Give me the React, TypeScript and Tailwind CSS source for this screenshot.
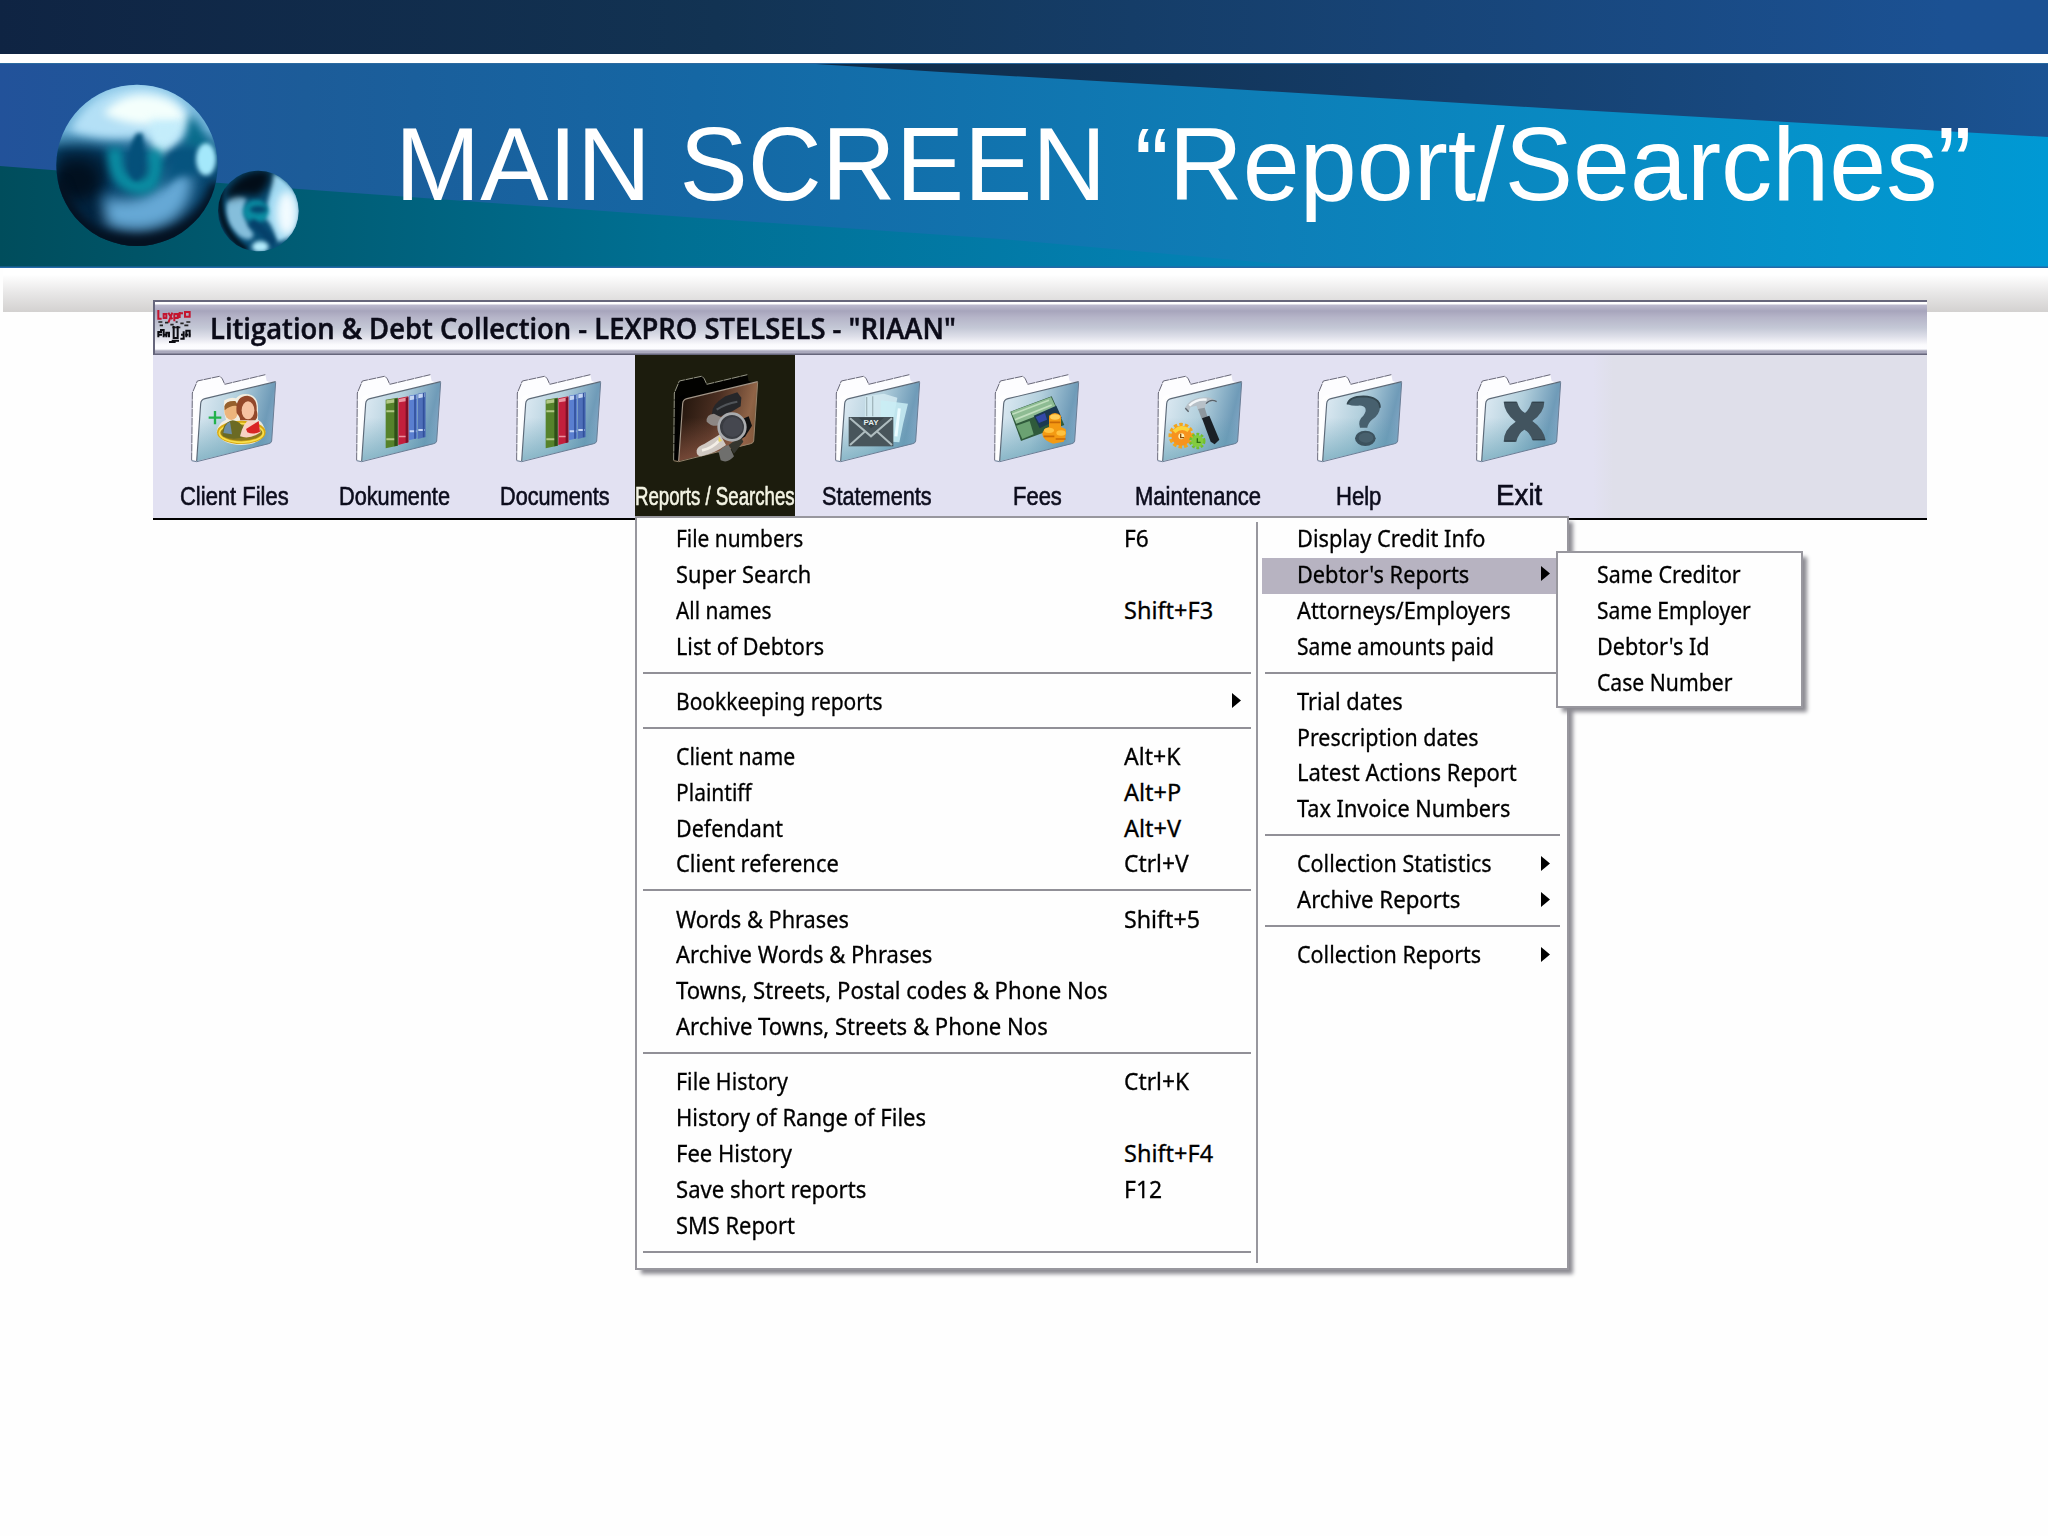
import { ReactNode, useLayoutEffect, useRef, useState } from "react";

type MenuItem = {
  label: string;
  width: number;
  keys?: string;
  keysWidth?: number;
  arrow?: boolean;
  active?: boolean;
};

type Entry = MenuItem | "separator";

const leftMenu: Entry[] = [
  { label: "File numbers", width: 127, keys: "F6", keysWidth: 25 },
  { label: "Super Search", width: 135 },
  { label: "All names", width: 95, keys: "Shift+F3", keysWidth: 89 },
  { label: "List of Debtors", width: 148 },
  "separator",
  { label: "Bookkeeping reports", width: 207, arrow: true },
  "separator",
  { label: "Client name", width: 119, keys: "Alt+K", keysWidth: 57 },
  { label: "Plaintiff", width: 76, keys: "Alt+P", keysWidth: 57 },
  { label: "Defendant", width: 107, keys: "Alt+V", keysWidth: 57 },
  { label: "Client reference", width: 163, keys: "Ctrl+V", keysWidth: 65 },
  "separator",
  { label: "Words & Phrases", width: 173, keys: "Shift+5", keysWidth: 76 },
  { label: "Archive Words & Phrases", width: 256 },
  { label: "Towns, Streets, Postal codes & Phone Nos", width: 432 },
  { label: "Archive Towns, Streets & Phone Nos", width: 372 },
  "separator",
  { label: "File History", width: 112, keys: "Ctrl+K", keysWidth: 65 },
  { label: "History of Range of Files", width: 250 },
  { label: "Fee History", width: 116, keys: "Shift+F4", keysWidth: 89 },
  { label: "Save short reports", width: 190, keys: "F12", keysWidth: 38 },
  { label: "SMS Report", width: 119 },
  "separator",
];

const rightMenu: Entry[] = [
  { label: "Display Credit Info", width: 189 },
  { label: "Debtor's Reports", width: 172, arrow: true, active: true },
  { label: "Attorneys/Employers", width: 214 },
  { label: "Same amounts paid", width: 197 },
  "separator",
  { label: "Trial dates", width: 106 },
  { label: "Prescription dates", width: 182 },
  { label: "Latest Actions Report", width: 220 },
  { label: "Tax Invoice Numbers", width: 213 },
  "separator",
  { label: "Collection Statistics", width: 195, arrow: true },
  { label: "Archive Reports", width: 163, arrow: true },
  "separator",
  { label: "Collection Reports", width: 184, arrow: true },
];

const subMenu: MenuItem[] = [
  { label: "Same Creditor", width: 144 },
  { label: "Same Employer", width: 154 },
  { label: "Debtor's Id", width: 113 },
  { label: "Case Number", width: 135 },
];

// squeezes or stretches one line of text to the given width
function Fit({ width, children }: { width: number; children: string }) {
  const ref = useRef<HTMLSpanElement>(null);
  const [scale, setScale] = useState(1);

  useLayoutEffect(() => {
    if (ref.current) {
      setScale(width / ref.current.offsetWidth);
    }
  }, [width, children])

  return (
    <span className="block whitespace-pre" style={{ width }}>
      <span ref={ref} className="inline-block origin-left" style={{ transform: `scaleX(${scale})` }}>{children}</span>
    </span>
  )
}

function Spheres() {
  return (
    <svg className="absolute left-[40px] top-[7px]" width="280" height="200" viewBox="0 0 840 600">
      <defs>
        <clipPath id="big"><circle cx="291" cy="286" r="242" /></clipPath>
        <clipPath id="small"><circle cx="655" cy="423" r="121" /></clipPath>
        <filter id="b22" x="-50%" y="-50%" width="200%" height="200%" colorInterpolationFilters="sRGB"><feGaussianBlur stdDeviation="20" /></filter>
        <filter id="b12" x="-50%" y="-50%" width="200%" height="200%" colorInterpolationFilters="sRGB"><feGaussianBlur stdDeviation="12" /></filter>
        <filter id="b6" x="-50%" y="-50%" width="200%" height="200%" colorInterpolationFilters="sRGB"><feGaussianBlur stdDeviation="6" /></filter>
        <linearGradient id="bigBase" x1="0" y1="0" x2="0" y2="1">
          <stop offset="0" stopColor="#8cc8e8" />
          <stop offset=".28" stopColor="#6db0d6" />
          <stop offset=".42" stopColor="#0b5480" />
          <stop offset=".7" stopColor="#08426a" />
          <stop offset="1" stopColor="#06101f" />
        </linearGradient>
      </defs>
      <g clipPath="url(#big)">
        <rect x="40" y="40" width="500" height="500" fill="url(#bigBase)" />
        <path d="M40 240 Q130 220 205 250 Q225 340 180 380 Q200 450 240 500 H100 Q50 420 40 240Z" fill="#032440" filter="url(#b22)" />
        <ellipse cx="110" cy="330" rx="70" ry="60" fill="#01101f" filter="url(#b22)" />
        <path d="M90 180 Q150 60 290 50 Q410 50 460 150 Q450 200 380 235 Q340 200 300 200 Q180 215 90 180Z" fill="#b4e0f6" filter="url(#b12)" />
        <path d="M190 130 Q240 75 310 75 Q420 80 435 150 Q400 180 330 165 Q240 160 190 130Z" fill="#f4fffc" filter="url(#b12)" />
        <path d="M330 150 L440 150 Q410 215 360 260 Q325 240 330 150Z" fill="#c4edfb" filter="url(#b12)" />
        <path d="M190 380 Q300 410 380 330 Q420 270 455 320 Q460 400 400 450 Q310 505 200 465Z" fill="#66a9d6" filter="url(#b22)" />
        <path d="M225 235 Q220 345 300 352 Q365 345 340 240" fill="none" stroke="#0a8ea3" strokeWidth="42" filter="url(#b12)" />
        <path d="M290 190 Q262 230 268 300 Q278 345 300 325 Q318 260 308 190Z" fill="#04507a" filter="url(#b6)" />
        <path d="M450 130 Q500 190 515 240 L430 240Z" fill="#0a6c8c" filter="url(#b12)" />
        <path d="M400 250 Q440 210 480 240 L470 320 Q420 300 360 360Z" fill="#06547f" filter="url(#b12)" />
        <path d="M55 340 Q100 515 290 518 Q480 510 530 340" fill="none" stroke="#04101f" strokeWidth="36" filter="url(#b12)" />
        <ellipse cx="498" cy="268" rx="30" ry="48" fill="#a4e8fb" filter="url(#b6)" />
      </g>
      <g clipPath="url(#small)">
        <rect x="530" y="300" width="250" height="250" fill="#0a5078" />
        <path d="M700 310 Q780 350 780 430 Q770 510 710 515 Q700 460 670 440 Q690 380 700 310Z" fill="#9fd9f2" filter="url(#b6)" />
        <ellipse cx="740" cy="430" rx="30" ry="66" fill="#f2fbff" filter="url(#b12)" />
        <path d="M560 400 Q580 360 620 385 Q600 440 640 490 Q640 520 600 500 Q550 460 560 400Z" fill="#85bedb" filter="url(#b6)" />
        <path d="M555 370 Q600 290 690 300 Q700 350 650 380 Q600 370 560 390Z" fill="#020d18" filter="url(#b12)" />
        <path d="M542 350 Q525 480 620 540" fill="none" stroke="#02101c" strokeWidth="18" filter="url(#b6)" />
        <ellipse cx="648" cy="425" rx="38" ry="34" fill="#0a8ea3" filter="url(#b6)" />
        <ellipse cx="655" cy="418" rx="26" ry="11" fill="#04466e" filter="url(#b6)" />
        <path d="M632 455 Q672 480 700 522" fill="none" stroke="#05406a" strokeWidth="24" filter="url(#b6)" />
        <ellipse cx="661" cy="530" rx="25" ry="17" fill="#b4ecfc" filter="url(#b6)" />
      </g>
    </svg>
  )
}

function Header() {
  return (
    <header>
      <div className="h-[54px] bg-linear-to-r from-[#0f2443] from-0% via-[#123353] via-35% to-[#1b5193] to-95%"></div>
      <div className="h-[9px] bg-white"></div>
      <div className="relative h-[205px]">
        <svg className="absolute inset-0" width="2048" height="205" viewBox="0 63 2048 205">
          <defs>
            <linearGradient id="sky">
              <stop offset="0" stopColor="#22529a" />
              <stop offset=".15" stopColor="#1c5c99" />
              <stop offset=".34" stopColor="#1567a4" />
              <stop offset=".6" stopColor="#0e7db6" />
              <stop offset=".9" stopColor="#0494cc" />
              <stop offset="1" stopColor="#0099d4" />
            </linearGradient>
            <linearGradient id="teal">
              <stop offset="0" stopColor="#004d5c" />
              <stop offset=".5" stopColor="#006f92" />
              <stop offset="1" stopColor="#0485bb" />
            </linearGradient>
            <linearGradient id="navy">
              <stop offset="0" stopColor="#0d2a47" />
              <stop offset=".3" stopColor="#12355a" />
              <stop offset="1" stopColor="#1b5393" />
            </linearGradient>
          </defs>
          <rect y="63" width="2048" height="205" fill="url(#sky)" />
          <path d="M0 166 L299 189 L700 218 L1001 239 L1325 268 H0Z" fill="url(#teal)" />
          <path d="M800 63 L941 72 L1199 87 L1560 109 L2048 137 V63Z" fill="url(#navy)" />
          <path d="M0 267.3 H2048" stroke="#2569a8" strokeWidth="1.4" />
          <path d="M0 63.5 H2048" stroke="#2b6aa0" strokeWidth="1" />
        </svg>
        <Spheres />
        <h1 className="relative pl-[395px] pt-[43px] text-[103px] leading-[118px] text-white font-['Liberation_Sans',Arial,sans-serif]">
          <Fit width={1577}>MAIN SCREEN “Report/Searches”</Fit>
        </h1>
      </div>
      <div className="ml-[3px] h-[44px] bg-linear-to-b from-white from-15% via-[#e9e8e8] via-55% to-[#d3d1d0]"></div>
    </header>
  )
}

function Folder({ inverted, children }: { inverted?: boolean; children: ReactNode }) {
  return (
    <svg width="88" height="90" viewBox="0 0 264 270">
      <defs>
        <linearGradient id="front" x1="0" y1=".35" x2="1" y2=".6">
          <stop offset="0" stopColor="#dce9f2" />
          <stop offset=".45" stopColor="#b3d0dd" />
          <stop offset=".85" stopColor="#6f9bb8" />
          <stop offset="1" stopColor="#86a9c9" />
        </linearGradient>
        <linearGradient id="shade" x1="0" y1="0" x2="0" y2="1">
          <stop offset=".45" stopColor="#5f9db2" stopOpacity="0" />
          <stop offset="1" stopColor="#5f9db2" stopOpacity=".6" />
        </linearGradient>
      </defs>
      <g className={inverted ? "invert" : ""}>
        <path d="M5 262 L7 60 L22 24 L88 10 Q96 10 104 34 L226 5 L230 24 L250 30 L40 90 L24 264Z" fill="#fdfdff" />
        <path d="M5 262 L7 60 L22 24 L88 10 Q96 10 104 34 L226 5" fill="none" stroke="#686878" strokeWidth="3" strokeDasharray="24 2" />
        <path d="M20 264 L32 92 Q33 80 45 77 L257 26 L245 204 Q244 210 238 212 Z" fill="url(#front)" />
        <path d="M20 264 L32 92 Q33 80 45 77 L257 26 L245 204 Q244 210 238 212 Z" fill="url(#shade)" />
        <path d="M20 264 L32 92 Q33 80 45 77 L257 26" fill="none" stroke="#5d6a78" strokeWidth="3.5" />
        <path d="M257 28 L245 204 Q244 210 236 212 L20 266 L5 263" fill="none" stroke="#6a7d95" strokeWidth="3" />
        <path d="M12 258 L18 90 Q22 72 40 68" fill="none" stroke="#fff" strokeWidth="8" />
      </g>
      {children}
    </svg>
  )
}

function ClientArt() {
  return (
    <g>
      <path d="M103 82 Q122 70 138 76 Q152 60 176 64 Q204 70 204 104 V140 Q222 150 226 176 Q216 214 154 216 Q92 214 80 176 Q84 150 108 140 Q98 110 103 82Z" fill="#fff3df" opacity=".85" />
      <ellipse cx="154" cy="178" rx="68" ry="30" fill="#8c7a1e" stroke="#d8a913" strokeWidth="10" />
      <ellipse cx="154" cy="180" rx="66" ry="28" fill="none" stroke="#f7e04f" strokeWidth="5" />
      <path d="M98 190 Q94 150 128 142 Q160 146 170 190 Q130 204 98 190Z" fill="#6b6a24" />
      <path d="M100 180 Q104 152 120 146 L126 184Z" fill="#6d8fa6" />
      <path d="M150 190 Q160 146 180 140 Q208 148 212 178 Q180 200 150 190Z" fill="#f7d3c3" />
      <path d="M168 168 L206 144 L210 176 Q190 186 172 178Z" fill="#d92525" />
      <ellipse cx="124" cy="114" rx="21" ry="27" fill="#edb57c" />
      <path d="M103 100 Q108 82 136 84 L146 100 Q124 94 104 112Z" fill="#96602c" />
      <path d="M140 120 Q134 70 172 68 Q202 72 200 112 Q206 134 196 142 L150 142 Q152 134 140 120Z" fill="#93482a" />
      <ellipse cx="174" cy="112" rx="19" ry="27" fill="#f6c3a3" />
      <path d="M56 134 H94 M75 114 V154" stroke="#22b14c" strokeWidth="7" />
    </g>
  )
}

function BooksArt() {
  return (
    <g>
      <path d="M92 80 L128 74 V218 L92 226Z" fill="#56822b" />
      <path d="M94 82 L126 77 V88 L94 92Z M94 112 H126 V118 H94Z M94 196 H126 V202 H94Z" fill="#b3c988" />
      <path d="M118 78 L128 76 V218 L118 220Z" fill="#2f4f18" />
      <path d="M130 76 L160 70 V208 L130 216Z" fill="#c21f3c" />
      <path d="M132 78 L158 73 V84 L132 88Z M132 188 H158 V193 H132Z" fill="#eb93a0" />
      <path d="M152 74 L160 72 V208 L152 210Z" fill="#7e1028" />
      <path d="M162 68 L186 64 V196 L162 202Z" fill="#5a7fd0" />
      <path d="M188 62 L212 58 V192 L188 198Z" fill="#4e6fb9" />
      <path d="M164 70 L184 66 V78 L164 82Z M190 64 L210 60 V72 L190 76Z M164 172 H184 V178 H164Z M190 168 H210 V174 H190Z" fill="#c3d5f4" />
      <path d="M180 66 V197 M206 60 V193" stroke="#31509b" strokeWidth="5" />
    </g>
  )
}

function SearchArt() {
  return (
    <g>
      <path d="M120 122 Q118 96 160 70 L196 58 L208 74 L206 100 Q160 130 132 132Z" fill="#26272a" />
      <path d="M134 110 Q160 92 196 86" fill="none" stroke="#505459" strokeWidth="6" />
      <path d="M104 146 Q102 124 126 122 L150 134 L148 154 Q124 166 104 146Z" fill="#8d8784" />
      <path d="M206 140 L230 130 L240 158 L220 190 L190 212 L182 190Z" fill="#101010" />
      <path d="M74 232 Q76 220 98 212 Q126 196 144 184 L162 216 Q130 240 88 250 Q72 250 74 232Z" fill="#cfc8c2" />
      <path d="M90 232 Q120 226 140 204" fill="none" stroke="#f3eee6" strokeWidth="8" />
      <path d="M140 238 Q150 220 170 216 L186 250 Q168 272 146 262Z" fill="#6f6f6d" />
      <path d="M170 216 L206 190 L214 206 L186 242Z" fill="#35362f" />
      <circle cx="180" cy="162" r="40" fill="#3a3c42" stroke="#a9abae" strokeWidth="8" />
      <circle cx="182" cy="162" r="30" fill="#45474f" />
      <path d="M140 190 L150 204 L140 206Z" fill="#f0dc60" />
    </g>
  )
}

function StatementsArt() {
  return (
    <g>
      <path d="M94 70 L150 62 L190 74 L176 150 H92Z" fill="#d5ebf2" opacity=".85" />
      <path d="M140 82 L222 92 L208 150 L196 208 L140 204Z" fill="#c9edf5" opacity=".85" />
      <path d="M98 72 V130 M116 70 V130" stroke="#a2b7bd" strokeWidth="4" />
      <path d="M196 106 L186 190" stroke="#eafbff" strokeWidth="9" />
      <rect x="44" y="132" width="134" height="88" fill="#48555b" />
      <path d="M48 136 L111 190 L174 136 M48 216 L92 176 M174 216 L130 176" fill="none" stroke="#aebcbf" strokeWidth="6" />
      <path d="M74 134 H150 L111 166Z" fill="#39454b" />
      <text x="111" y="156" textAnchor="middle" className="fill-[#e5eded] text-[24px] font-bold font-['Liberation_Sans',Arial,sans-serif]">PAY</text>
    </g>
  )
}

function FeesArt() {
  return (
    <g>
      <path d="M52 116 L176 70 L214 156 L84 204Z" fill="#2f5a3b" />
      <path d="M54 116 L174 72 L190 106 L70 152Z" fill="#8ebc93" />
      <path d="M70 158 L110 144 L122 184 L88 198Z" fill="#6ba272" />
      <path d="M58 124 L168 82 M66 140 L176 96" stroke="#c1dfbf" strokeWidth="5" />
      <path d="M122 128 L190 98 L206 134 L140 166Z" fill="#1c3a50" />
      <path d="M128 132 L156 120 L162 140 L138 150Z" fill="#3348a8" />
      <path d="M168 128 Q186 112 204 128 V162 L218 168 Q222 186 212 206 L180 212 Q150 202 148 184 Q150 166 168 162Z" fill="#f49a12" />
      <ellipse cx="186" cy="132" rx="15" ry="8" fill="#ffcf5a" />
      <ellipse cx="168" cy="172" rx="15" ry="8" fill="#ffc23f" />
      <ellipse cx="204" cy="180" rx="14" ry="8" fill="#ffc23f" />
      <path d="M170 148 H202 M152 190 H184 M188 198 H218" stroke="#c96a06" strokeWidth="5" />
    </g>
  )
}

function MaintenanceArt() {
  return (
    <g>
      <circle cx="76" cy="188" r="32" fill="none" stroke="#f2a51c" strokeWidth="13" strokeDasharray="10 6" />
      <circle cx="76" cy="188" r="30" fill="#f7931e" />
      <path d="M54 176 Q76 156 98 172" fill="none" stroke="#fbd53c" strokeWidth="12" />
      <circle cx="76" cy="190" r="9" fill="#fff0b8" />
      <path d="M74 182 V194 H84" fill="none" stroke="#8a4d08" strokeWidth="4" />
      <circle cx="124" cy="204" r="20" fill="none" stroke="#72bf2c" strokeWidth="9" strokeDasharray="8 5" />
      <circle cx="124" cy="204" r="18" fill="#82cc3f" />
      <path d="M124 196 V208 H134" fill="none" stroke="#2d6e12" strokeWidth="4" />
      <path d="M86 106 Q100 78 130 74 Q166 68 182 86 Q160 82 150 92 L146 108 L126 112 L122 98 L104 102 L96 118Z" fill="#b7c0c7" />
      <path d="M100 98 Q122 76 152 80" fill="none" stroke="#f3f6f8" strokeWidth="7" />
      <path d="M150 92 Q164 76 182 86 M88 106 L98 116" fill="none" stroke="#59636b" strokeWidth="4" />
      <path d="M126 108 L146 104 L156 136 L138 140Z" fill="#8d979e" />
      <path d="M138 136 L160 128 L190 200 L176 214 L164 206Z" fill="#1a2026" />
    </g>
  )
}

function HelpArt() {
  return (
    <g>
      <path d="M94 94 Q100 70 142 70 Q192 72 192 104 Q190 126 168 140 Q156 150 154 164 L132 164 Q124 142 142 128 Q152 116 148 106 Q142 96 126 98 Q112 100 94 94Z" fill="#47606e" />
      <path d="M94 94 Q100 70 142 70 Q192 72 192 104" fill="none" stroke="#33464f" strokeWidth="5" />
      <ellipse cx="148" cy="196" rx="31" ry="23" fill="#3c525e" />
      <ellipse cx="150" cy="194" rx="22" ry="15" fill="#48606d" />
    </g>
  )
}

function ExitArt() {
  return (
    <g>
      <path d="M86 86 H126 Q134 112 150 120 Q164 108 170 86 H208 Q208 118 172 144 Q206 168 212 202 H172 Q164 176 148 170 Q130 180 124 206 H86 Q86 170 122 146 Q88 120 86 86Z" fill="#42545f" />
      <path d="M88 88 H124 M172 88 H206 M174 200 H210 M88 204 H122" stroke="#33434d" strokeWidth="4" />
    </g>
  )
}

const toolbar = [
  { label: "Client Files", width: 109, shift: "pl-[37px]", art: <ClientArt /> },
  { label: "Dokumente", width: 111, shift: "pl-[41px]", art: <BooksArt /> },
  { label: "Documents", width: 110, shift: "pl-[41px]", art: <BooksArt /> },
  { label: "Reports / Searches", width: 160, shift: "pl-[37px]", art: <SearchArt />, active: true },
  { label: "Statements", width: 110, shift: "pl-[39px]", art: <StatementsArt /> },
  { label: "Fees", width: 49, shift: "pl-[37px]", art: <FeesArt /> },
  { label: "Maintenance", width: 126, shift: "pl-[39px]", art: <MaintenanceArt /> },
  { label: "Help", width: 45, shift: "pl-[39px]", art: <HelpArt /> },
  { label: "Exit", width: 46, shift: "pl-[37px]", art: <ExitArt />, large: true },
];

function AppIcon() {
  return (
    <svg width="36" height="36" viewBox="0 0 108 108">
      <path d="M4 6 V32 H14 M20 18 H28 V30 H20Z M34 14 L46 34 M46 14 L34 44 M52 16 V40 M52 18 H62 V30 H52 M68 12 V30 M68 16 H78 M84 12 H98 V26 H84Z" fill="none" stroke="#c4152f" strokeWidth="6" />
      <path d="M4 42 H16 M24 44 H34 M40 50 H50 M56 42 H62 M70 46 H80 M88 42 H100 M8 52 H18 M46 58 H70 M82 52 H94" stroke="#222" strokeWidth="5" />
      <path d="M4 88 V72 H12 V66 H20 V88 M28 88 V74 H36 V88 M50 54 V90 H62 V54 M44 98 H66 M70 92 H80 V70 M88 88 V68 H98 V88 M36 102 H56" fill="none" stroke="#0c0c12" strokeWidth="6" />
      <path d="M6 80 H36 M72 80 H100" stroke="#0c0c12" strokeWidth="6" strokeDasharray="9 4" />
    </svg>
  )
}

function Arrow() {
  return (
    <svg width="9" height="15" viewBox="0 0 9 15">
      <path d="M0 0 L9 7.5 L0 15Z" fill="#000" />
    </svg>
  )
}

function Row({ item, end }: { item: MenuItem; end: string }) {
  return (
    <li className={`flex items-center h-[35.9px] ${item.active ? "bg-[#b7b3c1]" : ""}`}>
      <div className="flex-1 pl-[34.5px] pb-[3px]"><Fit width={item.width}>{item.label}</Fit></div>
      {item.keys && <div className="w-[132px] pb-[3px]"><Fit width={item.keysWidth || 0}>{item.keys}</Fit></div>}
      {item.arrow && <div className={`pb-[4px] ${end}`}><Arrow /></div>}
    </li>
  )
}

function Column({ entries, line, end }: { entries: Entry[]; line: string; end: string }) {
  return (
    <ul>
      {entries.map((entry, index) => entry === "separator" ? (
        <li key={index} className={`h-[19.2px] pt-[6px] ${line}`}><hr className="border-t-2 border-[#919097]" /></li>
      ) : (
        <Row key={index} item={entry} end={end} />
      ))}
    </ul>
  )
}

function App() {
  return (
    <div className="w-[2048px] h-[1536px] overflow-hidden bg-[#fefefe]">
      <Header />

      <main className="relative -mt-[12px] ml-[153px] w-[1774px]">
        <div className="flex items-center h-[55px] pl-[2px] border-t-2 border-l-2 border-[#66667c] bg-[linear-gradient(to_bottom,#fff_0,#fff_2px,#bbb9ce_3px,#a7a5bc_9px,#b5b4c8_15px,#c4c8d6_26px,#dfe0ea_35px,#fbfbfe_43px,#fdfdff_47px,#aaa9bd_49px,#aaa9bd_51px,#66667c_52px)]">
          <div className="pb-[6px]"><AppIcon /></div>
          <div className="pl-[17px] pb-[2px] text-[29px] leading-[36px] font-semibold text-[#0b0b18] font-['Open_Sans',sans-serif] [-webkit-text-stroke:0.5px]">
            <Fit width={746}>Litigation & Debt Collection - LEXPRO STELSELS - "RIAAN"</Fit>
          </div>
        </div>

        <nav className="flex h-[165px] border-b-2 border-black bg-[linear-gradient(to_right,#e2e1f2_1440px,#dfdfea_1460px)]">
          {toolbar.map((item) => (
            <div key={item.label} className={`w-[160.6px] h-[161px] shrink-0 pt-[18px] ${item.active ? "bg-[#1c1c0d] text-[#f4f4e4]" : "text-[#0c0c1c]"}`}>
              <div className={item.shift}><Folder inverted={item.active}>{item.art}</Folder></div>
              <div className={`flex justify-center leading-[30px] font-['Liberation_Sans',Arial,sans-serif] [-webkit-text-stroke:0.6px] ${item.active ? "" : "pl-[2px]"} ${item.large ? "pt-[17px] text-[29px]" : "pt-[18px] text-[26px]"}`}>
                <Fit width={item.width}>{item.label}</Fit>
              </div>
            </div>
          ))}
        </nav>

        {/* opened menu */}
        <div className="absolute left-[482px] top-[216px] flex w-[934px] h-[754px] pt-[4px] bg-[#fefefe] border-2 border-[#98979e] shadow-[5px_5px_4px_-1px_#8d8c93] text-[23.5px] leading-[33px] text-black font-['Noto_Sans',sans-serif] [-webkit-text-stroke:0.3px]">
          <div className="w-[621px] h-[741px] pl-[4px] border-r-2 border-[#98979e]">
            <Column entries={leftMenu} line="ml-[2px] mr-[5px]" end="pr-[15px]" />
          </div>
          <div className="flex-1 pl-[4px]">
            <Column entries={rightMenu} line="ml-[3px] mr-[7px]" end="pr-[17px]" />
          </div>
        </div>

        <div className="absolute left-[1403px] top-[251px] w-[247px] h-[157px] pt-[5px] pl-[4px] bg-[#fefefe] border-2 border-[#98979e] shadow-[5px_5px_4px_-1px_#8d8c93] text-[23.5px] leading-[33px] text-black font-['Noto_Sans',sans-serif] [-webkit-text-stroke:0.3px]">
          <Column entries={subMenu} line="" end="" />
        </div>
      </main>
    </div>
  )
}

export default App;
